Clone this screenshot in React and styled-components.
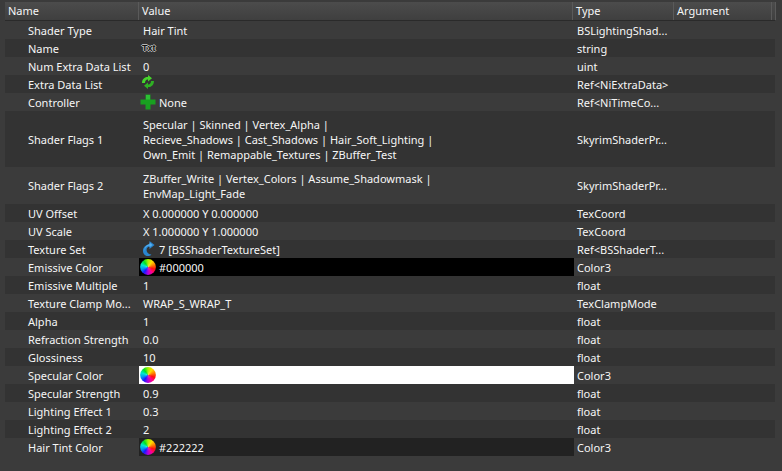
import styled, { createGlobalStyle } from "styled-components";

const GlobalStyle = createGlobalStyle`
    html, body {
        margin: 0;
        padding: 0;
        background: #3b3b3b;
    }
`

const Page = styled.div`
    box-sizing: border-box;
    width: 782px;
    height: 471px;
    padding: 2px 7px 0 5px;
    overflow: hidden;
    background: #3b3b3b;
    font-family: "Noto Sans", "Open Sans", sans-serif;
    font-size: 11px;
    color: #f6f6f6;
`

const Header = styled.div`
    display: grid;
    grid-template-columns: 134px 434px 101px 98px 3px;
    height: 19px;
    background: linear-gradient(#4c4c4c, #3f3f3f);
    border-bottom: 1px solid #2a2a2a;
    box-sizing: border-box;
`

const HeaderCell = styled.div`
    padding-left: 3px;
    line-height: 18px;
    border-right: 1px solid #5a5a5a;
`

const Row = styled.div`
    display: grid;
    grid-template-columns: 134px 435px 1fr;
    height: ${(p) => p.$height || 18}px;
    background: ${(p) => (p.$odd ? "#333333" : "#3b3b3b")};
`

const NameCell = styled.div`
    display: flex;
    align-items: center;
    padding-left: 23px;
    white-space: nowrap;
    overflow: hidden;
`

const ValueCell = styled.div`
    display: flex;
    align-items: center;
    gap: 3px;
    padding-left: 1px;
    background: ${(p) => p.$bg || "transparent"};
`

const ValueText = styled.span`
    padding-left: ${(p) => (p.$plain ? 3 : 0)}px;
    line-height: 15px;
    white-space: pre-line;
`

const TypeCell = styled.div`
    display: flex;
    align-items: center;
    padding-left: 3px;
    white-space: nowrap;
`

const TinyTxt = styled.span`
    padding-left: 2px;
    font-family: "Liberation Sans", sans-serif;
    font-size: 9px;
    font-weight: 700;
    color: #111111;
    text-shadow: 1px 0 0 #b8b8b8, -1px 0 0 #b8b8b8, 0 1px 0 #b8b8b8, 0 -1px 0 #b8b8b8;
`

const Icon = styled.svg`
    flex: none;
    width: 16px;
    height: 16px;
`

const RecycleIcon = styled(Icon)`
    margin-top: -5px;
`

const ConicFill = styled.div`
    width: 16px;
    height: 16px;
    background:
        radial-gradient(circle, rgba(255, 255, 255, 0.2), rgba(255, 255, 255, 0) 35%),
        conic-gradient(#a8f000, #ffe000, #ff8000, #ff1010, #ff0090, #b000e0, #1818ff, #0098f0, #00e8d0, #00e020, #a8f000);
`

const Wheel = () => (
    <Icon viewBox="0 0 16 16">
        <defs>
            <clipPath id="wheelClip">
                <circle cx="8" cy="8" r="7.9" />
            </clipPath>
        </defs>
        <foreignObject width="16" height="16" clipPath="url(#wheelClip)">
            <ConicFill />
        </foreignObject>
    </Icon>
);

const Plus = () => (
    <Icon viewBox="0 0 16 16">
        <path d="M5.5 0.5h5v5h5v5h-5v5h-5v-5h-5v-5h5z" fill="#18a020" />
        <path d="M6 1h4v4.5H6z" fill="#2cc034" />
    </Icon>
);

const arcPiece = "M2 9C2 5 5 2.5 8 3V1L12 4.3 8 7.4V5.6C6.4 5.3 5 6.6 5 9z";

const Recycle = () => (
    <RecycleIcon viewBox="0 0 16 16">
        <path d={arcPiece} fill="#46d42c" />
        <path d={arcPiece} fill="#2fb024" transform="rotate(180 8 8)" />
    </RecycleIcon>
);

const Arrow = () => (
    <Icon viewBox="0 0 16 16">
        <path d="M9.5 0 14.5 4 9.5 8V5.6C7 6 6.2 8 6.8 10.2 7.3 12 9 13.4 11.5 13.4 9.5 15.6 5.4 15.8 3.6 12.6 1.6 8.6 4.4 3.6 9.5 3.2z" fill="#2a86d0" />
        <path d="M9.5 1.5 12.5 4 9.5 6.2V4.5C6.5 4.8 4.2 7.6 4.8 10.6 3.8 7.4 5.8 3.8 9.5 3.2z" fill="#58b0ee" />
    </Icon>
);

const rows = [
    { name: "Shader Type", value: "Hair Tint", type: "BSLightingShad..." },
    { name: "Name", tiny: true, type: "string" },
    { name: "Num Extra Data List", value: "0", type: "uint" },
    { name: "Extra Data List", icon: <Recycle />, type: "Ref<NiExtraData>" },
    { name: "Controller", icon: <Plus />, iconText: "None", type: "Ref<NiTimeCo..." },
    {
        name: "Shader Flags 1",
        height: 56,
        value: "Specular | Skinned | Vertex_Alpha |\nRecieve_Shadows | Cast_Shadows | Hair_Soft_Lighting |\nOwn_Emit | Remappable_Textures | ZBuffer_Test",
        type: "SkyrimShaderPr...",
    },
    {
        name: "Shader Flags 2",
        height: 37,
        value: "ZBuffer_Write | Vertex_Colors | Assume_Shadowmask |\nEnvMap_Light_Fade",
        type: "SkyrimShaderPr...",
    },
    { name: "UV Offset", value: "X 0.000000 Y 0.000000", type: "TexCoord" },
    { name: "UV Scale", value: "X 1.000000 Y 1.000000", type: "TexCoord" },
    { name: "Texture Set", icon: <Arrow />, iconText: "7 [BSShaderTextureSet]", type: "Ref<BSShaderT..." },
    { name: "Emissive Color", icon: <Wheel />, iconText: "#000000", bg: "#000000", type: "Color3" },
    { name: "Emissive Multiple", value: "1", type: "float" },
    { name: "Texture Clamp Mo...", value: "WRAP_S_WRAP_T", type: "TexClampMode" },
    { name: "Alpha", value: "1", type: "float" },
    { name: "Refraction Strength", value: "0.0", type: "float" },
    { name: "Glossiness", value: "10", type: "float" },
    { name: "Specular Color", icon: <Wheel />, bg: "#ffffff", type: "Color3" },
    { name: "Specular Strength", value: "0.9", type: "float" },
    { name: "Lighting Effect 1", value: "0.3", type: "float" },
    { name: "Lighting Effect 2", value: "2", type: "float" },
    { name: "Hair Tint Color", icon: <Wheel />, iconText: "#222222", bg: "#222222", type: "Color3" },
];

export default function App() {
    return (
        <Page>
            <GlobalStyle />
            <Header>
                <HeaderCell>Name</HeaderCell>
                <HeaderCell>Value</HeaderCell>
                <HeaderCell>Type</HeaderCell>
                <HeaderCell>Argument</HeaderCell>
                <HeaderCell />
            </Header>
            {rows.map((row, index) => (
                <Row key={row.name} $odd={index % 2 === 1} $height={row.height}>
                    <NameCell>{row.name}</NameCell>
                    <ValueCell $bg={row.bg}>
                        {row.value && <ValueText $plain>{row.value}</ValueText>}
                        {row.tiny && <TinyTxt>Txt</TinyTxt>}
                        {row.icon}
                        {row.iconText && <ValueText>{row.iconText}</ValueText>}
                    </ValueCell>
                    <TypeCell>{row.type}</TypeCell>
                </Row>
            ))}
        </Page>
    );
}
